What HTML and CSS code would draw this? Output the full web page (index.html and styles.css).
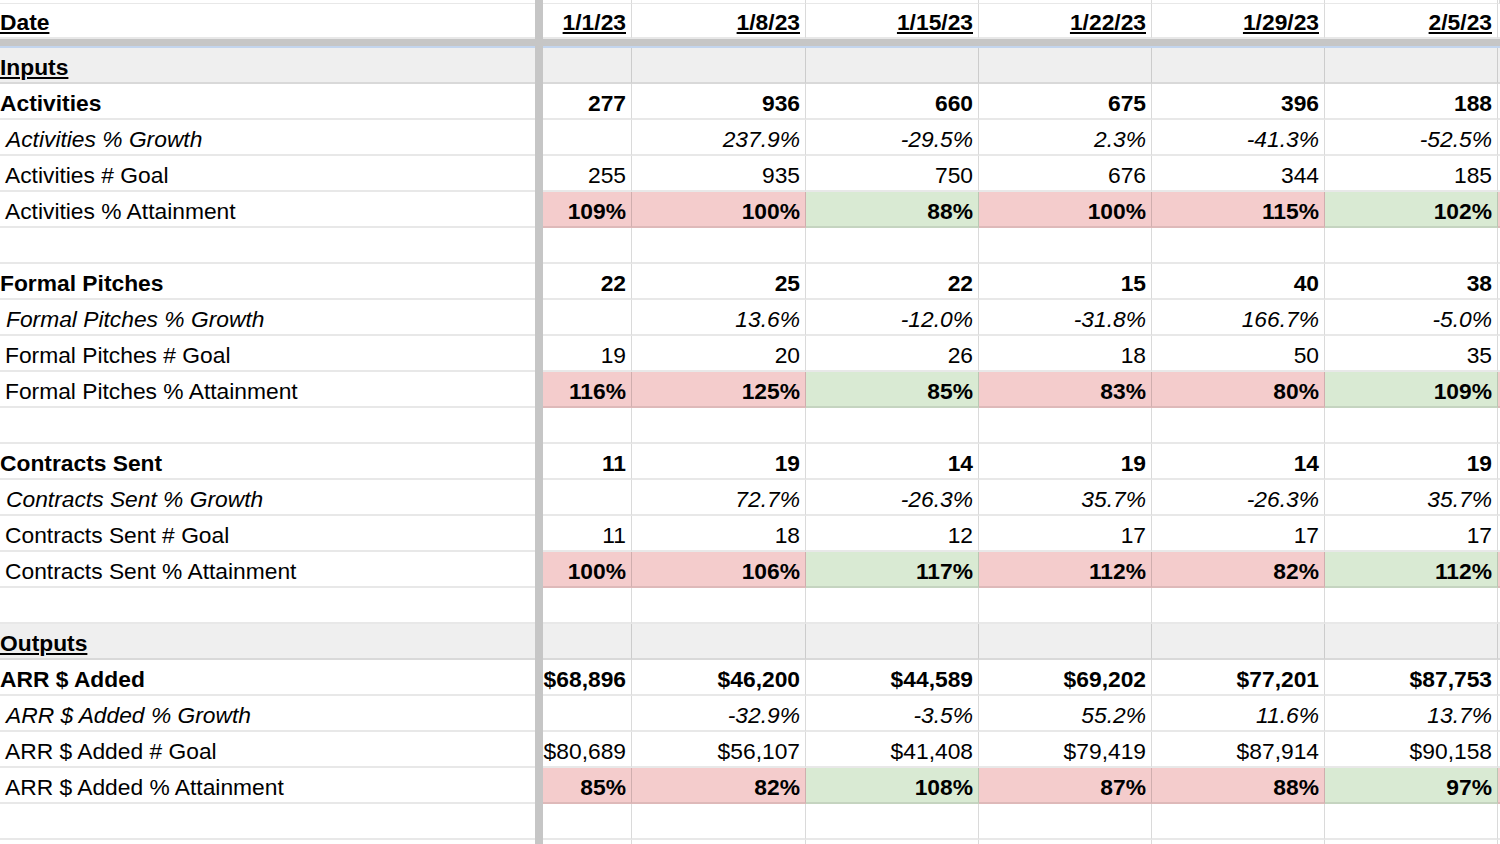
FILE: index.html
```html
<!DOCTYPE html>
<html>
<head>
<meta charset="utf-8">
<link rel="stylesheet" href="styles.css">
</head>
<body>
<div class="sheet">
  <div class="row top">
    <div class="c lab"></div><div class="bar"></div>
    <div class="c"></div><div class="c"></div><div class="c"></div><div class="c"></div><div class="c"></div><div class="c"></div><div class="c"></div>
  </div>
  <div class="row head">
    <div class="c lab b u">Date</div><div class="bar"></div>
    <div class="c b u">1/1/23</div><div class="c b u">1/8/23</div><div class="c b u">1/15/23</div><div class="c b u">1/22/23</div><div class="c b u">1/29/23</div><div class="c b u">2/5/23</div><div class="c"></div>
  </div>
  <div class="hbar"></div>
  <div class="row blue">
    <div class="bl"></div><div class="bar"></div><div class="bl"></div>
  </div>

  <div class="row sec">
    <div class="c lab b u">Inputs</div><div class="bar"></div>
    <div class="c"></div><div class="c"></div><div class="c"></div><div class="c"></div><div class="c"></div><div class="c"></div><div class="c"></div>
  </div>
  <div class="row">
    <div class="c lab b">Activities</div><div class="bar"></div>
    <div class="c b">277</div><div class="c b">936</div><div class="c b">660</div><div class="c b">675</div><div class="c b">396</div><div class="c b">188</div><div class="c"></div>
  </div>
  <div class="row">
    <div class="c lab i">Activities % Growth</div><div class="bar"></div>
    <div class="c i"></div><div class="c i">237.9%</div><div class="c i">-29.5%</div><div class="c i">2.3%</div><div class="c i">-41.3%</div><div class="c i">-52.5%</div><div class="c"></div>
  </div>
  <div class="row">
    <div class="c lab n">Activities # Goal</div><div class="bar"></div>
    <div class="c">255</div><div class="c">935</div><div class="c">750</div><div class="c">676</div><div class="c">344</div><div class="c">185</div><div class="c"></div>
  </div>
  <div class="row">
    <div class="c lab n">Activities % Attainment</div><div class="bar"></div>
    <div class="c b red">109%</div><div class="c b red">100%</div><div class="c b green">88%</div><div class="c b red">100%</div><div class="c b red">115%</div><div class="c b green">102%</div><div class="c red"></div>
  </div>
  <div class="row">
    <div class="c lab"></div><div class="bar"></div>
    <div class="c"></div><div class="c"></div><div class="c"></div><div class="c"></div><div class="c"></div><div class="c"></div><div class="c"></div>
  </div>

  <div class="row">
    <div class="c lab b">Formal Pitches</div><div class="bar"></div>
    <div class="c b">22</div><div class="c b">25</div><div class="c b">22</div><div class="c b">15</div><div class="c b">40</div><div class="c b">38</div><div class="c"></div>
  </div>
  <div class="row">
    <div class="c lab i">Formal Pitches % Growth</div><div class="bar"></div>
    <div class="c i"></div><div class="c i">13.6%</div><div class="c i">-12.0%</div><div class="c i">-31.8%</div><div class="c i">166.7%</div><div class="c i">-5.0%</div><div class="c"></div>
  </div>
  <div class="row">
    <div class="c lab n">Formal Pitches # Goal</div><div class="bar"></div>
    <div class="c">19</div><div class="c">20</div><div class="c">26</div><div class="c">18</div><div class="c">50</div><div class="c">35</div><div class="c"></div>
  </div>
  <div class="row">
    <div class="c lab n">Formal Pitches % Attainment</div><div class="bar"></div>
    <div class="c b red">116%</div><div class="c b red">125%</div><div class="c b green">85%</div><div class="c b red">83%</div><div class="c b red">80%</div><div class="c b green">109%</div><div class="c red"></div>
  </div>
  <div class="row">
    <div class="c lab"></div><div class="bar"></div>
    <div class="c"></div><div class="c"></div><div class="c"></div><div class="c"></div><div class="c"></div><div class="c"></div><div class="c"></div>
  </div>

  <div class="row">
    <div class="c lab b">Contracts Sent</div><div class="bar"></div>
    <div class="c b">11</div><div class="c b">19</div><div class="c b">14</div><div class="c b">19</div><div class="c b">14</div><div class="c b">19</div><div class="c"></div>
  </div>
  <div class="row">
    <div class="c lab i">Contracts Sent % Growth</div><div class="bar"></div>
    <div class="c i"></div><div class="c i">72.7%</div><div class="c i">-26.3%</div><div class="c i">35.7%</div><div class="c i">-26.3%</div><div class="c i">35.7%</div><div class="c"></div>
  </div>
  <div class="row">
    <div class="c lab n">Contracts Sent # Goal</div><div class="bar"></div>
    <div class="c">11</div><div class="c">18</div><div class="c">12</div><div class="c">17</div><div class="c">17</div><div class="c">17</div><div class="c"></div>
  </div>
  <div class="row">
    <div class="c lab n">Contracts Sent % Attainment</div><div class="bar"></div>
    <div class="c b red">100%</div><div class="c b red">106%</div><div class="c b green">117%</div><div class="c b red">112%</div><div class="c b red">82%</div><div class="c b green">112%</div><div class="c red"></div>
  </div>
  <div class="row">
    <div class="c lab"></div><div class="bar"></div>
    <div class="c"></div><div class="c"></div><div class="c"></div><div class="c"></div><div class="c"></div><div class="c"></div><div class="c"></div>
  </div>

  <div class="row sec">
    <div class="c lab b u">Outputs</div><div class="bar"></div>
    <div class="c"></div><div class="c"></div><div class="c"></div><div class="c"></div><div class="c"></div><div class="c"></div><div class="c"></div>
  </div>
  <div class="row">
    <div class="c lab b">ARR $ Added</div><div class="bar"></div>
    <div class="c b">$68,896</div><div class="c b">$46,200</div><div class="c b">$44,589</div><div class="c b">$69,202</div><div class="c b">$77,201</div><div class="c b">$87,753</div><div class="c"></div>
  </div>
  <div class="row">
    <div class="c lab i">ARR $ Added % Growth</div><div class="bar"></div>
    <div class="c i"></div><div class="c i">-32.9%</div><div class="c i">-3.5%</div><div class="c i">55.2%</div><div class="c i">11.6%</div><div class="c i">13.7%</div><div class="c"></div>
  </div>
  <div class="row">
    <div class="c lab n">ARR $ Added # Goal</div><div class="bar"></div>
    <div class="c">$80,689</div><div class="c">$56,107</div><div class="c">$41,408</div><div class="c">$79,419</div><div class="c">$87,914</div><div class="c">$90,158</div><div class="c"></div>
  </div>
  <div class="row">
    <div class="c lab n">ARR $ Added % Attainment</div><div class="bar"></div>
    <div class="c b red">85%</div><div class="c b red">82%</div><div class="c b green">108%</div><div class="c b red">87%</div><div class="c b red">88%</div><div class="c b green">97%</div><div class="c red"></div>
  </div>
  <div class="row">
    <div class="c lab"></div><div class="bar"></div>
    <div class="c"></div><div class="c"></div><div class="c"></div><div class="c"></div><div class="c"></div><div class="c"></div><div class="c"></div>
  </div>
  <div class="row">
    <div class="c lab"></div><div class="bar"></div>
    <div class="c"></div><div class="c"></div><div class="c"></div><div class="c"></div><div class="c"></div><div class="c"></div><div class="c"></div>
  </div>
</div>
</body>
</html>
```

FILE: styles.css
```css
html, body {
  margin: 0;
  padding: 0;
  background: #ffffff;
  overflow: hidden;
}

.sheet {
  width: 1500px;
  height: 844px;
  overflow: hidden;
  font-family: "Liberation Sans", Arial, sans-serif;
  font-size: 22.8px;
  color: #000000;
}

.row {
  display: grid;
  grid-template-columns: 535px 8px 89px 174px 173px 173px 173px 173px 1fr;
  height: 36px;
}

.row.top {
  height: 4px;
}

.row.head {
  height: 35px;
}

.row.sec {
  background: #efefef;
}

.c {
  box-sizing: border-box;
  display: flex;
  align-items: flex-end;
  justify-content: flex-end;
  padding: 0 5px 2px 0;
  border-right: 1px solid rgba(0, 0, 0, 0.14);
  border-bottom: 2px solid rgba(0, 0, 0, 0.09);
  white-space: nowrap;
  overflow: hidden;
  line-height: 26px;
}

.row.top .c {
  border-bottom-width: 1px;
  padding: 0;
}

.c.lab {
  justify-content: flex-start;
  padding-left: 0;
  border-right: none;
}

.c.lab.n {
  padding-left: 5px;
}

.c.lab.i {
  padding-left: 6px;
}

.b {
  font-weight: bold;
}

.i {
  font-style: italic;
}

.u {
  text-decoration: underline;
  text-decoration-thickness: 1.5px;
  text-underline-offset: 2px;
}

.red {
  background: #f4cccc;
}

.green {
  background: #d9ead3;
}

.bar {
  background: #c6c6c6;
}

.hbar {
  height: 7px;
  background: #c6c6c6;
}

.row.blue {
  height: 2px;
  grid-template-columns: 535px 8px 1fr;
}

.bl {
  background: #c3d5ee;
}
```
